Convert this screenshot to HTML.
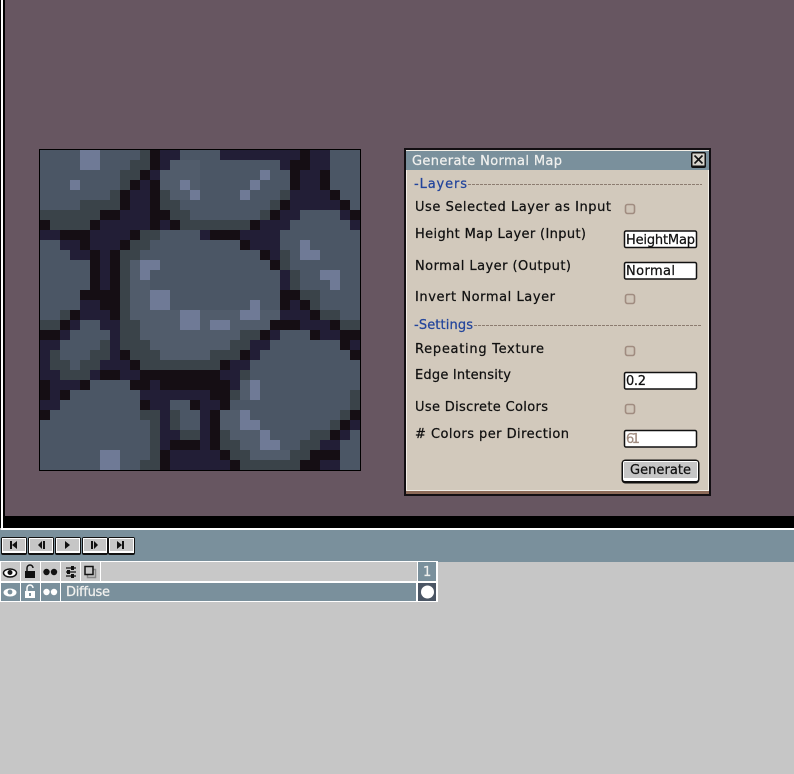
<!DOCTYPE html>
<html><head><meta charset="utf-8"><title>Generate Normal Map</title>
<style>
html,body{margin:0;padding:0;background:#c6c6c6;width:794px;height:774px;overflow:hidden}
svg{display:block;position:absolute;left:0;top:0}
text{font-family:"DejaVu Sans","Liberation Sans",sans-serif;font-size:13px;fill:#111;stroke:#111;stroke-width:.25px}
text.w{fill:#f0f0ee;stroke:#f0f0ee}
text.b{fill:#23459c;stroke:#23459c}
text.g{fill:#a08c80;stroke:#a08c80}
</style></head><body>
<svg width="794" height="774" viewBox="0 0 794 774" xmlns="http://www.w3.org/2000/svg">
<rect width="794" height="774" fill="#c6c6c6"/>
<rect width="794" height="517" fill="#675661"/>
<rect x="0" width="1" height="528" fill="#000"/>
<rect x="1" width="2" height="530" fill="#fff"/>
<rect x="3" width="2" height="528" fill="#000"/>
<rect x="3" y="516" width="791" height="12" fill="#000"/>
<rect x="3" y="528" width="791" height="2" fill="#fff"/>
<rect y="530" width="794" height="32" fill="#7a909c"/>

<rect x="39" y="149" width="322" height="322" fill="#000"/>
<g id="art" transform="translate(40 150) scale(10)" shape-rendering="crispEdges"></g>

<!-- dialog -->
<rect x="404" y="148" width="307" height="348" fill="#120e12"/>
<rect x="406" y="150" width="303" height="344" fill="#f2eee6"/>
<rect x="407" y="151" width="301" height="339" fill="#d2c9bc"/>
<rect x="406" y="491" width="303" height="3" fill="#8c6a58"/>
<rect x="406" y="490" width="303" height="1" fill="#f2eee6"/>
<rect x="406" y="151" width="303" height="19" fill="#7a909c"/>
<text class="w" x="412" y="165" textLength="150" lengthAdjust="spacing">Generate Normal Map</text>
<rect x="691" y="152" width="15" height="16" rx="2" fill="#111"/>
<rect x="692.5" y="153.5" width="12" height="12" fill="#d8d4cc"/>
<path d="M694.5 155.5l8 8M702.5 155.5l-8 8" stroke="#111" stroke-width="1.6"/>

<text class="b" x="414" y="188" textLength="53" lengthAdjust="spacing">-Layers</text>
<line x1="468" y1="184.5" x2="702" y2="184.5" stroke="#8c7c70" stroke-dasharray="3 1"/>
<text x="415" y="211" textLength="196" lengthAdjust="spacing">Use Selected Layer as Input</text>
<text x="415" y="238" textLength="171" lengthAdjust="spacing">Height Map Layer (Input)</text>
<text x="415" y="270" textLength="156" lengthAdjust="spacing">Normal Layer (Output)</text>
<text x="415" y="301" textLength="140" lengthAdjust="spacing">Invert Normal Layer</text>
<text class="b" x="414" y="329" textLength="59" lengthAdjust="spacing">-Settings</text>
<line x1="474" y1="325.5" x2="702" y2="325.5" stroke="#8c7c70" stroke-dasharray="3 1"/>
<text x="415" y="353" textLength="129" lengthAdjust="spacing">Repeating Texture</text>
<text x="415" y="379" textLength="96" lengthAdjust="spacing">Edge Intensity</text>
<text x="415" y="411" textLength="133" lengthAdjust="spacing">Use Discrete Colors</text>
<text x="415" y="438" textLength="154" lengthAdjust="spacing"># Colors per Direction</text>

<g fill="#cfc5b8" stroke="#a08c80" stroke-width="1.6">
<rect x="625.5" y="204.5" width="9" height="9" rx="2"/>
<rect x="625.5" y="294.5" width="9" height="9" rx="2"/>
<rect x="625.5" y="346.5" width="9" height="9" rx="2"/>
<rect x="625.5" y="404.5" width="9" height="9" rx="2"/>
</g>

<g fill="#fff" stroke="#111" stroke-width="1.5">
<rect x="624.5" y="231" width="72" height="16.5" rx="1.5"/>
<rect x="624.5" y="262.5" width="72" height="16.5" rx="1.5"/>
<rect x="624.5" y="372.5" width="72" height="16.5" rx="1.5"/>
<rect x="624.5" y="430.5" width="72" height="16.5" rx="1.5"/>
</g>
<text x="626" y="244" textLength="69" lengthAdjust="spacing">HeightMap</text>
<text x="626" y="275" textLength="49" lengthAdjust="spacing">Normal</text>
<text x="626" y="385" textLength="20" lengthAdjust="spacing">0.2</text>
<text class="g" x="626" y="443" textLength="14" lengthAdjust="spacing">61</text>

<rect x="621.5" y="459.5" width="78" height="24" rx="4" fill="#111"/>
<rect x="623" y="461" width="75" height="20" rx="2" fill="#fff"/>
<rect x="624" y="462" width="73" height="16" fill="#c6c6c6"/>
<text x="630" y="474" textLength="61" lengthAdjust="spacing">Generate</text>

<!-- playback buttons -->
<g id="btns">
<g fill="#111"><rect x="1" y="537" width="26" height="18" rx="2"/><rect x="28" y="537" width="26" height="18" rx="2"/><rect x="55" y="537" width="26" height="18" rx="2"/><rect x="82" y="537" width="26" height="18" rx="2"/><rect x="108" y="537" width="27" height="18" rx="2"/></g>
<g fill="#fff"><rect x="2" y="538" width="24" height="15"/><rect x="29" y="538" width="24" height="15"/><rect x="56" y="538" width="24" height="15"/><rect x="83" y="538" width="24" height="15"/><rect x="109" y="538" width="25" height="15"/></g>
<g fill="#c6c6c6"><rect x="3" y="539" width="22" height="12"/><rect x="30" y="539" width="22" height="12"/><rect x="57" y="539" width="22" height="12"/><rect x="84" y="539" width="22" height="12"/><rect x="110" y="539" width="23" height="12"/></g>
<g fill="#111">
<path d="M10 541h2v8h-2zM17 541v8l-5-4z"/>
<path d="M38 545l4-4v8zM43 541h2v8h-2z"/>
<path d="M65 541l5 4-5 4z"/>
<path d="M91 541h2v8h-2zM94 541l4 4-4 4z"/>
<path d="M117 541l5 4-5 4zM122 541h2v8h-2z"/>
</g>
</g>

<!-- layer rows -->
<rect x="0" y="561" width="438" height="41" fill="#fff"/>
<g fill="#c8c8c8">
<rect x="1" y="562" width="19" height="19"/><rect x="21" y="562" width="19" height="19"/><rect x="41" y="562" width="19" height="19"/><rect x="61" y="562" width="19" height="19"/><rect x="81" y="562" width="19" height="19"/><rect x="101" y="562" width="316" height="19"/>
</g>
<rect x="418" y="562" width="18" height="19" fill="#7a909c"/>
<text class="w" x="423" y="576">1</text>
<g fill="#7a909c">
<rect x="1" y="583" width="19" height="18"/><rect x="21" y="583" width="19" height="18"/><rect x="41" y="583" width="19" height="18"/><rect x="61" y="583" width="355" height="18"/>
</g>
<rect x="418" y="583" width="18" height="18" fill="#4a5564"/>
<circle cx="427.5" cy="592" r="6.5" fill="#fff"/>
<text class="w" x="66" y="596" textLength="44" lengthAdjust="spacing">Diffuse</text>

<!-- header icons -->
<ellipse cx="10" cy="573" rx="6.5" ry="4" fill="#fff" stroke="#111" stroke-width="1.5"/>
<circle cx="10" cy="572.5" r="2.5" fill="#111"/>
<rect x="25" y="571" width="10" height="7" fill="#111"/>
<path d="M27 571v-3a3 3 0 0 1 6 0" fill="none" stroke="#111" stroke-width="1.5"/>
<circle cx="46.5" cy="572" r="3.2" fill="#111"/><circle cx="54" cy="572" r="3.2" fill="#111"/>
<path d="M66 568h10M66 572h10M66 576h10" stroke="#111" stroke-width="1.2"/>
<rect x="71" y="566" width="3" height="4" fill="#111"/><rect x="67" y="570" width="3" height="4" fill="#111"/><rect x="71" y="574" width="3" height="4" fill="#111"/>
<rect x="87.5" y="569.5" width="8" height="8" fill="none" stroke="#888" stroke-width="1.5"/>
<rect x="85" y="566.5" width="8" height="8" fill="#c8c8c8" stroke="#111" stroke-width="1.5"/>

<!-- row icons -->
<ellipse cx="10" cy="592.5" rx="6.5" ry="4" fill="#fff"/>
<circle cx="10" cy="592" r="2.4" fill="#7a909c"/>
<rect x="25" y="591" width="10" height="7" fill="#fff"/>
<path d="M27 591v-3a3 3 0 0 1 6 0" fill="none" stroke="#fff" stroke-width="1.5"/>
<rect x="29" y="593" width="2" height="3" fill="#7a909c"/>
<circle cx="46.5" cy="592" r="3.2" fill="#fff"/><circle cx="54" cy="592" r="3.2" fill="#fff"/>
</svg>
<script>
var rows=[
"....hh....skdd....ddddddddkdd...",
"....hh...sskdmmm........dkkdd...",
"........sskdmmmm......h..kddk...",
"...h....skdkmmhm.....h...kddk...",
".......skddksmmh....h...sddddk..",
"....sssskddkss.........skdddddk.",
"sssssskkdddkkss.......skdd....dk",
"ksssskdddddkdkssssssskddd......d",
"ddkkkddddkss....dkkkdddd........",
"..ddkdddkss.........kddd..h.....",
"...ddkdkss............kds.hh....",
".....kdksmhh...........ks.......",
".....kdksmh.............ds..hh..",
".....kdksmm.............ds...h..",
"....kkkksmmhh...........kkss....",
"....ddkksmmhh........h..kdks....",
"..skdddksmmmmmhhmmmmhhmmdddkss..",
"sskd..ddssmmmmhhmhhmmmmkkkdddkss",
"kkd....dssmmmmmmmmmmsskd...kddkk",
"dd....sdsssmmmmmmmmssdd.......kd",
"ds...ssdksssmmmmmssskd.........k",
"dss.ssdddkssssssSskdd...........".replace("S","s"),
"ddsssdkkddkkkkkkkkdds...........",
"kdddk....kkdkkkkkkkdmh..........",
"kdk.......dddddddkksmh.........s",
"dd........kdd..kddk............s",
"k.........ssds..dkmmh.........sk",
"...........sds..dkmmhh.......skd",
"...........sddssdksmmmh....sskd.",
"...........sdkkkdkssmmhh..ssdd..",
"......hh...skdddddkssmmmmsskkk..",
"......hh..sskddddddkssssssskkdd."
];
rows[31]="......hh..sskddddddk"+"sssssskkdd..";
var col={'.':'#4b5665',m:'#515c6b',h:'#6f7a96',s:'#3a4349',d:'#221e36',k:'#150e14'};
var g=document.getElementById('art');
for(var y=0;y<32;y++){var r=rows[y];for(var x=0;x<32;){var c=r[x],w=1;while(x+w<32&&r[x+w]===c)w++;
var e=document.createElementNS('http://www.w3.org/2000/svg','rect');
e.setAttribute('x',x);e.setAttribute('y',y);e.setAttribute('width',w);e.setAttribute('height',1);e.setAttribute('fill',col[c]);g.appendChild(e);x+=w;}}
</script>
</body></html>
